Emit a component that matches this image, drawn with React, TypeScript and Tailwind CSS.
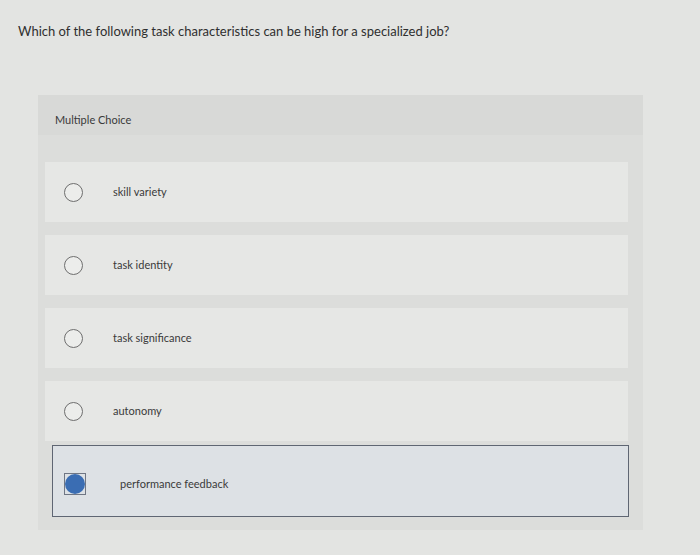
import React from 'react';

const options = [
  'skill variety',
  'task identity',
  'task significance',
  'autonomy',
  'performance feedback',
];

function Radio({ checked }: { checked?: boolean }) {
  if (checked) {
    return (
      <div className="w-[22px] h-[22px] border border-[#6f7684] flex items-center justify-center shrink-0">
        <div className="w-[20px] h-[20px] rounded-full bg-[#3a6db3]" />
      </div>
    );
  }
  return <div className="w-[19px] h-[19px] rounded-full border border-[#6e6e6e] bg-[#ecedeb] shrink-0" />;
}

export default function App() {
  const selected = 4;
  return (
    <div className="w-[700px] h-[555px] bg-[#e3e4e2] overflow-hidden font-['Lato','Liberation_Sans',sans-serif] text-[#3a3a3a]">
      <p className="pl-[18px] pt-[23px] text-[13px] leading-[16px] text-[#2f2f2f]">
        Which of the following task characteristics can be high for a specialized job?
      </p>
      <div className="ml-[38px] mt-[56px] w-[605px] h-[435px] bg-[#dcdddb] flex flex-col">
        <div className="h-[40px] bg-[#d8d9d7] pl-[17px] pt-[18px] text-[11px] leading-[13px] text-[#3a3a3a]">
          Multiple Choice
        </div>
        <div className="flex flex-col gap-[13px] pt-[27px] px-[7px]">
          {options.map((o, i) =>
            i === selected ? (
              <div
                key={o}
                className="h-[72px] mx-[7px] mt-[-9px] border border-[#5f6673] bg-[#dde1e5] flex items-center gap-[34px] pl-[11px] pt-[6px]"
              >
                <Radio checked />
                <span className="text-[11px] text-[#3a3a3a]">{o}</span>
              </div>
            ) : (
              <div key={o} className="h-[60px] mr-[8px] bg-[#e6e7e5] flex items-center gap-[30px] pl-[19px]">
                <Radio />
                <span className="text-[11px] text-[#3a3a3a]">{o}</span>
              </div>
            )
          )}
        </div>
      </div>
    </div>
  );
}
